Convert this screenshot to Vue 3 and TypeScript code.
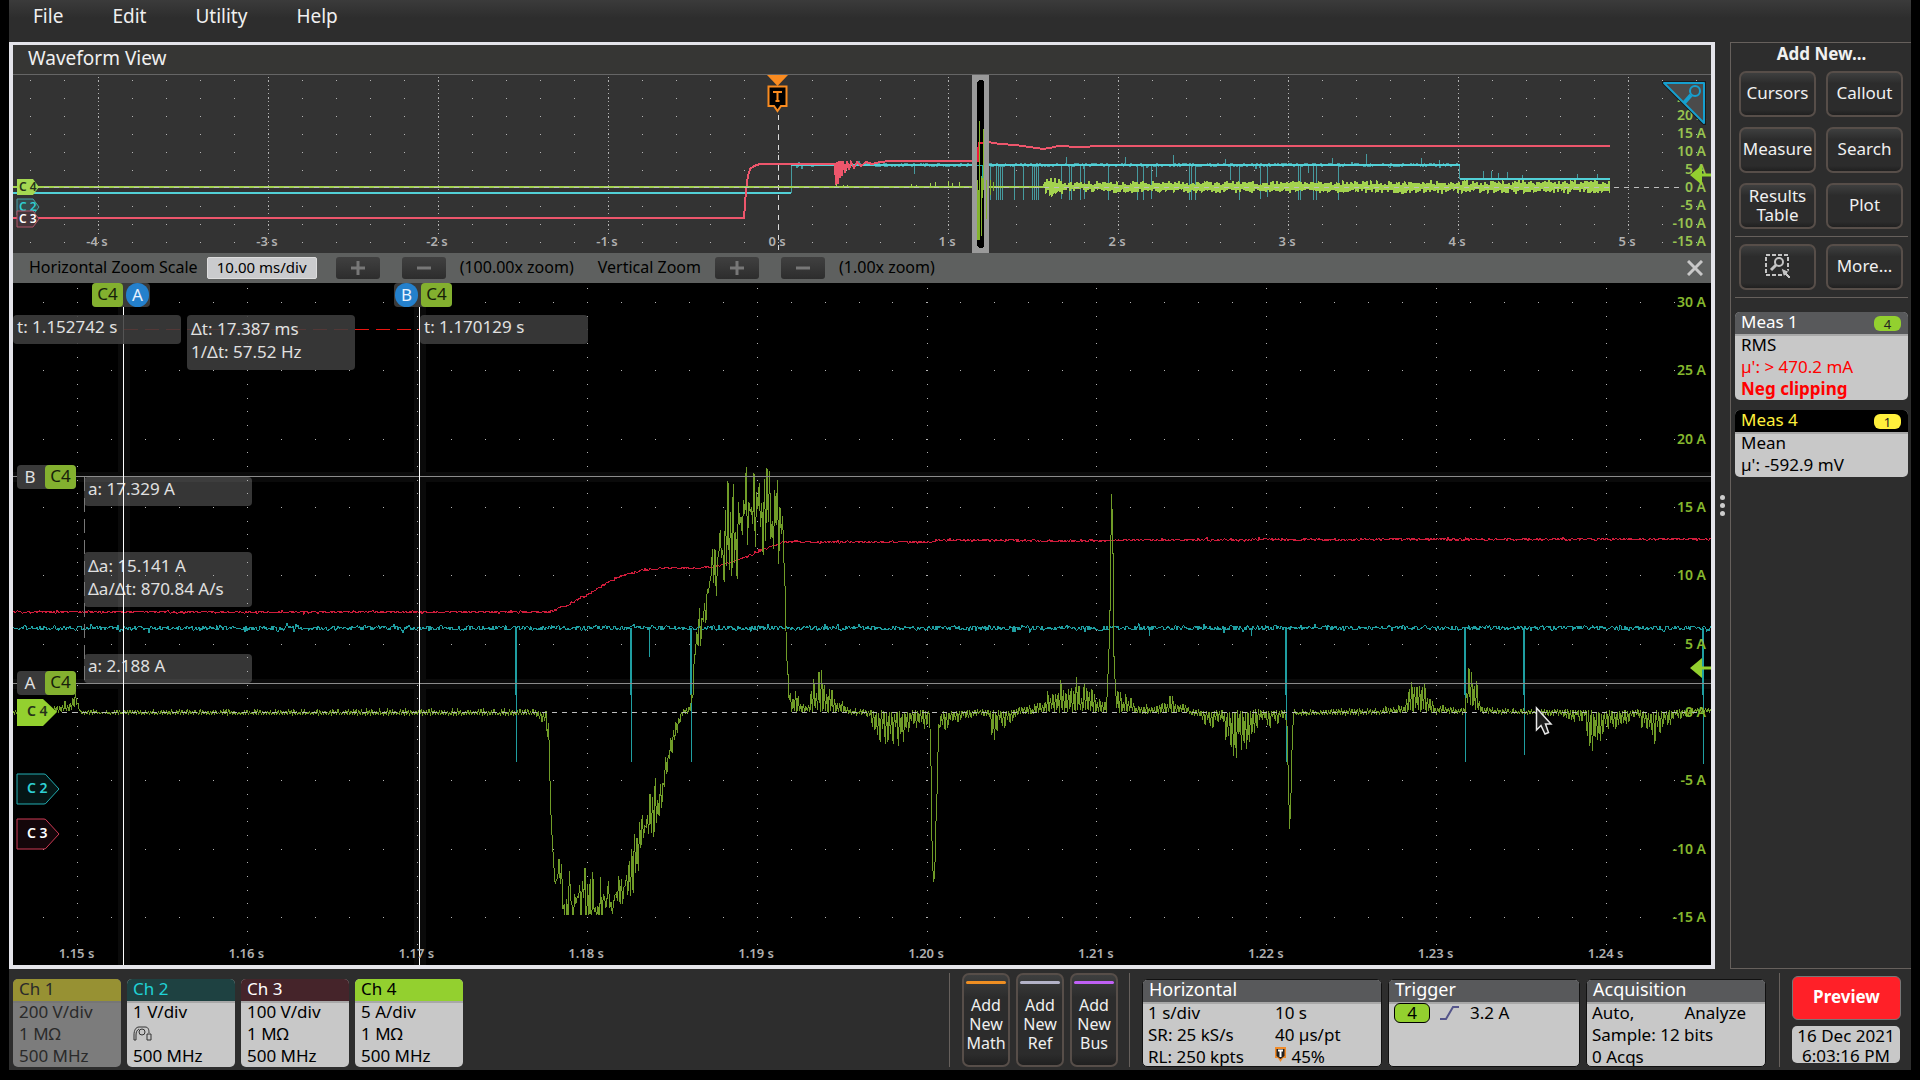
<script setup lang="ts">
import { ref } from 'vue'

type Point = [number, number]
type Band = [number, number, number]

const zoomScale = ref('10.00 ms/div')
const menus = ['File', 'Edit', 'Utility', 'Help']

// Both plots share one horizontal space; each has its own vertical span.
const LEFT = 13
const WIDTH = 1698
const OVER = { top: 75, height: 178 }
const MAIN = { top: 283, height: 682 }

const px = (x: number) => `${((x - LEFT) / WIDTH) * 100}%`
const at = (x: number, y: number, plot: { top: number }) => ({ left: px(x), top: `${y - plot.top}px` })

// Small repeatable generator, so the noise is the same on every load.
function makeRandom(seed: number) {
  let s = seed
  return () => {
    s = (s * 1664525 + 1013904223) % 4294967296
    return s / 4294967296
  }
}

function lerp(points: Point[], x: number) {
  for (let i = 1; i < points.length; i++) {
    if (x <= points[i][0]) {
      const [x0, y0] = points[i - 1]
      const [x1, y1] = points[i]
      return x1 === x0 ? y1 : y0 + ((y1 - y0) * (x - x0)) / (x1 - x0)
    }
  }
  return points[points.length - 1][1]
}

function toPath(points: Point[]) {
  return 'M' + points.map(([x, y]) => `${x.toFixed(1)} ${y.toFixed(1)}`).join('L')
}

function noisy(points: Point[], amp: number, seed: number, step = 1) {
  const rnd = makeRandom(seed)
  const out: Point[] = []
  for (let x = points[0][0]; x <= points[points.length - 1][0]; x += step) {
    let n = (rnd() - 0.5) * 2 * amp
    if (rnd() > 0.95) n *= 2
    out.push([x, lerp(points, x) + n])
  }
  return toPath(out)
}

// Alternates between the top and bottom of an envelope. The side that is away
// from the zero level varies most; the side near it returns to the level.
function burst(bands: Band[], seed: number, zero: number, spread: number, step: number) {
  const rnd = makeRandom(seed)
  const tops = bands.map(([x, t]) => [x, t] as Point)
  const bottoms = bands.map(([x, , b]) => [x, b] as Point)
  const out: Point[] = []
  let up = true
  for (let x = bands[0][0]; x <= bands[bands.length - 1][0]; x += step) {
    const t = lerp(tops, x)
    const b = lerp(bottoms, x)
    const h = b - t
    const far = rnd() * spread
    const near = rnd() * 0.12
    const above = b <= zero + 3 && t > zero - 60
    const below = t >= zero - 6 && b < zero + 60
    if (up) out.push([x, t + h * (below && !above ? near : far)])
    else out.push([x, b - h * (above ? near : far)])
    up = !up
  }
  return toPath(out)
}

const Z = 712
const hump = (x: number, up: number, down: number): Band => [x, Z - up, Z + down]

const c4Bands: Band[] = [
  hump(13, 2, 2), hump(52, 2, 2), hump(54, 8, 1), hump(70, 12, 0), hump(77, 22, -8), hump(80, 2, 2), hump(536, 3, 3),
  [540, 712, 726], [546, 711, 734], [549, 725, 745], [550, 745, 810], [551, 815, 836], [553, 838, 862],
  [555, 865, 912], [558, 840, 890], [562, 860, 910], [564, 868, 935], [580, 866, 940], [600, 864, 940],
  [612, 864, 940], [622, 866, 925], [630, 844, 900], [640, 816, 882], [650, 790, 850], [660, 762, 820],
  [670, 736, 774], [677, 720, 735], [682, 711, 718], [690, 705, 713], [693, 680, 700], [695, 640, 665],
  [697, 600, 650], [702, 606, 646], [709, 556, 608], [715, 540, 600], [720, 505, 590], [726, 488, 582],
  [730, 470, 570], [737, 474, 604], [742, 472, 560], [748, 460, 560], [755, 462, 556], [760, 466, 576],
  [769, 450, 590], [774, 474, 578], [778, 470, 582], [782, 505, 570], [785, 560, 600], [787, 650, 680],
  [789, 690, 700], hump(790, 26, 2), hump(797, 26, 1), hump(802, 14, 1), hump(810, 16, 1), hump(813, 40, 1),
  hump(819, 52, 1), hump(826, 40, 1), hump(834, 20, 1), hump(844, 9, 1), hump(852, 3, 2), hump(866, 2, 4),
  hump(873, 2, 18), hump(880, 2, 32), hump(890, 2, 36), hump(902, 2, 34), hump(912, 2, 24), hump(928, 2, 16),
  hump(930, 2, 2), [931, 760, 770], [932, 840, 848], [934, 898, 904], [936, 812, 840], [937, 800, 815],
  [938, 728, 735], hump(940, 1, 22), hump(948, 1, 20), hump(960, 2, 11), hump(970, 2, 6), hump(990, 2, 5),
  hump(992, 2, 34), hump(999, 2, 22), hump(1010, 2, 15), hump(1020, 5, 2), hump(1035, 8, 2), hump(1046, 22, 1),
  hump(1053, 44, 1), hump(1062, 46, 2), hump(1074, 42, 1), hump(1084, 30, 1), hump(1094, 22, 1),
  hump(1104, 18, 1), hump(1107, 4, 1), [1108, 668, 672], [1110, 630, 634], [1111, 498, 502], [1112, 487, 489],
  [1113, 542, 546], [1114, 660, 664], [1116, 690, 700], hump(1117, 22, 1), hump(1130, 17, 1), hump(1142, 9, 2),
  hump(1160, 8, 2), hump(1170, 20, 1), hump(1184, 12, 1), hump(1190, 3, 2), hump(1200, 2, 12), hump(1216, 2, 18),
  hump(1226, 3, 30), hump(1232, 3, 48), hump(1241, 3, 48), hump(1250, 3, 36), hump(1262, 3, 20), hump(1275, 2, 13),
  hump(1286, 2, 14), [1288, 740, 760], [1289, 820, 826], [1290, 832, 836], [1292, 750, 756], hump(1293, 2, 3),
  hump(1375, 4, 2), hump(1392, 7, 2), hump(1406, 8, 1), hump(1410, 44, 1), hump(1424, 40, 1), hump(1429, 18, 1),
  hump(1435, 8, 1), hump(1450, 6, 1), hump(1465, 4, 1), hump(1467, 44, -10), hump(1472, 46, -4), hump(1478, 40, 1),
  hump(1482, 5, 1), hump(1540, 2, 2), hump(1560, 3, 9), hump(1584, 3, 10), hump(1587, 2, 30), hump(1593, 2, 46),
  hump(1604, 2, 32), hump(1616, 2, 18), hump(1640, 3, 10), hump(1646, 2, 30), hump(1651, 2, 38), hump(1663, 2, 20),
  hump(1676, 3, 10), hump(1690, 3, 4), hump(1711, 4, 3),
]

const clipFloor = 915
const c4Main = burst(c4Bands, 12, Z, 0.6, 1.3)

const c3Main = noisy(
  [[13, 612], [550, 612], [565, 606], [587, 595], [602, 586], [620, 576], [640, 571], [660, 568], [700, 568],
    [720, 566], [740, 559], [760, 551], [782, 542], [930, 542], [940, 540], [1100, 541], [1120, 540], [1711, 539]],
  1.2, 5)
const c2Main = noisy([[13, 628], [1711, 628]], 2.4, 77)
const c2MainDrops: Point[] = [
  [516, 762], [631, 762], [649, 657], [691, 762], [1149, 636], [1251, 636], [1286, 762], [1465, 762], [1524, 755], [1703, 764],
]

const c3Over =
  'M13 218H744L746 190L748 176L750 169L754 166L760 164H835L836 185L837 162L838 184L839 161L840 178L841 161L842 176L843 161L845 173L847 161L849 170L851 162L854 168L857 162L861 166L866 162L872 164L880 162L890 161H977L979 152L980 143L988 142L1000 144L1015 145L1030 147L1043 149L1050 148L1058 146L1080 147L1100 146H1610'
const c2Over = 'M13 193H791M791 165H1460M1460 179H1610'
const c2OverDrops: Point[] = [
  [986, 200], [988, 200], [990, 200], [996, 200], [998, 200], [1000, 200], [1002, 200], [1014, 200], [1023, 200],
  [1032, 200], [1034, 200], [1036, 200], [1038, 200], [1061, 199], [1069, 200], [1071, 200], [1080, 200], [1084, 199],
  [1108, 200], [1137, 200], [1143, 200], [1151, 199], [1156, 177], [1189, 200], [1191, 200], [1195, 200], [1230, 180],
  [1239, 200], [1260, 199], [1267, 197], [1298, 200], [1300, 200], [1308, 173], [1313, 200], [1316, 200], [1338, 200],
  [914, 174], [1066, 157], [1125, 157], [1173, 155], [1225, 159], [1332, 158], [1366, 154], [1421, 158], [1439, 160],
]
const c2OverTails: Point[] = [[1483, 171], [1491, 171], [1498, 173], [1507, 172], [1522, 175], [1577, 174], [1597, 174]]
const c2OverNoise = noisy([[792, 165], [1459, 165]], 2, 31)
const c4Over = burst(
  [[1043, 184, 189], [1046, 179, 195], [1052, 177, 197], [1060, 179, 195], [1068, 182, 191], [1100, 181, 193],
    [1200, 181, 193], [1400, 180, 194], [1610, 180, 194]], 9, 0, 0.35, 1)
const c4OverTicks: Point[] = [[836, 184], [843, 185], [847, 185], [911, 184], [916, 185], [930, 183], [935, 182], [948, 181], [952, 183], [959, 182]]

const overCols = Array.from({ length: 10 }, (_, i) => ({ x: 98 + 170 * i, text: `${i - 4} s` }))
const overMinor = Array.from({ length: 50 }, (_, i) => 30 + 34 * i).filter((x) => x < 1708)
const overRows = [80, 98, 116, 134, 152, 170, 206, 224, 242]
const overLabels = ['25 A', '20 A', '15 A', '10 A', '5 A', '0 A', '-5 A', '-10 A', '-15 A'].map((text, i) => ({ text, y: 97 + 18 * i }))

const mainCols = Array.from({ length: 10 }, (_, i) => ({ x: 77.5 + 169.9 * i, text: `${(1.15 + i / 100).toFixed(2)} s` }))
const mainMinor = Array.from({ length: 50 }, (_, i) => 43.5 + 33.98 * i).filter((x) => x < 1680)
const mainRows = Array.from({ length: 10 }, (_, i) => 302.5 + 68.35 * i).filter((_, i) => i !== 6)
const mainDots = Array.from({ length: 49 }, (_, i) => 288.8 + 13.67 * i)
const mainLabels = Array.from({ length: 10 }, (_, i) => ({ text: `${30 - 5 * i} A`, y: 302 + 68.35 * i }))

const channels = [
  { name: 'Ch 1', cls: 'ch1', scale: '200 V/div', term: '1 MΩ', bw: '500 MHz' },
  { name: 'Ch 2', cls: 'ch2', scale: '1 V/div', term: '', bw: '500 MHz' },
  { name: 'Ch 3', cls: 'ch3', scale: '100 V/div', term: '1 MΩ', bw: '500 MHz' },
  { name: 'Ch 4', cls: 'ch4', scale: '5 A/div', term: '1 MΩ', bw: '500 MHz' },
]
const adders = [
  { kind: 'Math', cls: 'math' },
  { kind: 'Ref', cls: 'ref' },
  { kind: 'Bus', cls: 'bus' },
]
</script>

<template>
  <div class="app">
    <nav class="menu">
      <button v-for="m in menus" :key="m" type="button">{{ m }}</button>
    </nav>

    <div class="middle">
      <section class="view">
        <h1>Waveform View</h1>

        <div class="plot overview">
          <svg class="fill" viewBox="13 75 1698 178" preserveAspectRatio="none" shape-rendering="crispEdges" aria-hidden="true">
            <g class="dots">
              <path v-for="y in overRows" :key="y" :d="overMinor.map((x) => `M${x} ${y}h1v1h-1z`).join('')" />
            </g>
            <g class="dotline">
              <path v-for="c in overCols.filter((c) => c.text !== '0 s')" :key="c.x" :d="`M${c.x + 0.5} 77V235`" />
            </g>
            <path class="zerotime" d="M778.5 115V250" />
            <path class="c2 thin" :d="c2OverDrops.map(([x, y]) => `M${x + 0.5} 165V${y}`).join('') + 'M791.5 165V193M1459.5 165V179'" />
            <path class="c2 thin" :d="c2OverTails.map(([x, y]) => `M${x + 0.5} 179V${y}`).join('')" />
            <path class="c2 thin" :d="c2OverNoise" />
            <path class="c2 thick" :d="c2Over" />
            <path class="c3 thick" :d="c3Over" />
            <path class="c4 thin" :d="c4Over" />
            <path class="c4 thin" :d="c4OverTicks.map(([x, y]) => `M${x + 0.5} 187V${y}`).join('')" />
            <path class="c4 thick" d="M13 187H1610" />
            <path class="zeroline" d="M24 187.500H1680" />
            <g class="window">
              <path class="frame" fill-rule="evenodd" d="M972 75H989V253H972ZM977 82V246L979 248H982L984 246V82L982 80H979Z" />
              <path class="hole" d="M977 82V246L979 248H982L984 246V82L982 80H979Z" />
              <path class="v2" d="M977 165H984M979.500 165V200M982.500 165V196" />
              <path class="v3" d="M977 161H978V152L979 143H984" />
              <path class="v4" d="M977.500 180V240M978.500 190V240M979.500 121V240M981.500 176V236M982.500 178V198M983.500 129V190M986.500 180V219M990.500 180V195M993.500 182V191" />
            </g>
          </svg>
          <span v-for="c in overCols" :key="c.text" class="time" :style="at(c.x - 1, 241, OVER)">{{ c.text }}</span>
          <span v-for="l in overLabels" :key="l.text" class="amp" :style="{ top: `${l.y - OVER.top}px` }">{{ l.text }}</span>
          <svg class="trig" :style="at(767, 75, OVER)" width="22" height="38" viewBox="0 0 22 38" aria-hidden="true">
            <path d="M0 0H21L10.500 11Z" fill="#f98b20" />
            <path d="M1.500 11.500H19.500V31H14L10.500 36L7 31H1.500Z" fill="#000" stroke="#f98b20" stroke-width="2" />
            <path d="M6 17H15M10.500 17V26M8.500 26H12.500" stroke="#f98b20" stroke-width="2" fill="none" />
          </svg>
          <svg class="lens" width="44" height="44" viewBox="0 0 44 44" aria-hidden="true">
            <path d="M2 2H42V42Z" fill="#4b4b4b" stroke="#1a1a1a" stroke-width="4" />
            <path d="M2 2H42V42Z" fill="#4b4b4b" stroke="#169fcf" stroke-width="2" stroke-linejoin="round" />
            <circle cx="33" cy="10" r="5" fill="none" stroke="#169fcf" stroke-width="2" />
            <path d="M29 14L22 22" stroke="#169fcf" stroke-width="4" />
          </svg>
          <svg class="level lo" width="21" height="22" viewBox="0 0 21 22" aria-hidden="true">
            <path d="M0 11L12 1V9.500H21V12.500H12V21Z" fill="#93d02f" />
          </svg>
          <span class="tag small t4" :style="at(16, 178, OVER)"><svg width="24" height="18" viewBox="0 0 24 18"><path d="M1 1H17L23 9L17 17H1Z" /></svg><b>C 4</b></span>
          <span class="tag small t2" :style="at(16, 198, OVER)"><svg width="24" height="18" viewBox="0 0 24 18"><path d="M1 1H17L23 9L17 17H1Z" /></svg><b>C 2</b></span>
          <span class="tag small t3" :style="at(16, 210, OVER)"><svg width="24" height="18" viewBox="0 0 24 18"><path d="M1 1H17L23 9L17 17H1Z" /></svg><b>C 3</b></span>
        </div>

        <div class="zoombar">
          <label for="hscale">Horizontal Zoom Scale</label>
          <input id="hscale" v-model="zoomScale" type="text" />
          <button type="button" class="step" aria-label="Zoom in horizontally"><svg width="16" height="16" viewBox="0 0 16 16"><path d="M8 1V15M1 8H15" /></svg></button>
          <button type="button" class="step" aria-label="Zoom out horizontally"><svg width="16" height="16" viewBox="0 0 16 16"><path d="M1 8H15" /></svg></button>
          <span class="factor">(100.00x zoom)</span>
          <span class="vlabel">Vertical Zoom</span>
          <button type="button" class="step" aria-label="Zoom in vertically"><svg width="16" height="16" viewBox="0 0 16 16"><path d="M8 1V15M1 8H15" /></svg></button>
          <button type="button" class="step" aria-label="Zoom out vertically"><svg width="16" height="16" viewBox="0 0 16 16"><path d="M1 8H15" /></svg></button>
          <span class="factor">(1.00x zoom)</span>
          <button type="button" class="close" aria-label="Close zoom"><svg width="16" height="16" viewBox="0 0 16 16"><path d="M1 1L15 15M15 1L1 15" /></svg></button>
        </div>

        <div class="plot main">
          <div class="readout" :style="at(84, 477, MAIN)">a: 17.329 A</div>
          <div class="readout two" :style="at(84, 552, MAIN)">Δa: 15.141 A<br />Δa/Δt: 870.84 A/s</div>
          <div class="readout" :style="at(84, 654, MAIN)">a: 2.188 A</div>
          <svg class="fill" viewBox="13 283 1698 682" preserveAspectRatio="none" shape-rendering="crispEdges" aria-hidden="true">
            <defs>
              <clipPath id="adc"><rect x="13" y="283" width="1698" :height="clipFloor - 283" /></clipPath>
            </defs>
            <g class="halo">
              <path d="M118 283h12v682h-12zM414 283h12v682h-12zM13 472h1698v10h-1698zM13 679h1698v10h-1698z" />
            </g>
            <g class="dots">
              <path v-for="y in mainRows" :key="y" :d="mainMinor.map((x) => `M${Math.floor(x)} ${Math.floor(y)}h1v1h-1z`).join('')" />
              <path v-for="c in mainCols" :key="c.x" :d="mainDots.map((y) => `M${Math.floor(c.x)} ${Math.floor(y)}h1v1h-1z`).join('')" />
            </g>
            <path class="m2" :d="c2Main" />
            <path class="m2" :d="c2MainDrops.map(([x, y]) => `M${x + 0.5} 628V${y}` + (y > 700 ? `M${x - 0.5} 628V695` : '')).join('')" />
            <path class="m3" :d="c3Main" />
            <path class="m4" clip-path="url(#adc)" :d="c4Main" />
            <path class="zeroline" d="M62 712.500H1700" />
            <path class="hcursor" d="M13 476.500H1711M13 683.500H1711" />
            <path class="bracket" d="M84.500 477V683" />
            <path class="span" d="M124 329.500H419" />
            <path class="vcursor" d="M123.500 283V965M419.500 283V965" />
          </svg>
          <span v-for="c in mainCols" :key="c.text" class="time" :style="at(c.x - 1, 953, MAIN)">{{ c.text }}</span>
          <span v-for="l in mainLabels" :key="l.text" class="amp" :style="{ top: `${l.y - MAIN.top}px` }">{{ l.text }}</span>

          <div class="readout" :style="at(13, 315, MAIN)">t: 1.152742 s</div>
          <div class="readout two" :style="at(187, 315, MAIN)">Δt: 17.387 ms<br />1/Δt: 57.52 Hz</div>
          <div class="readout" :style="at(420, 315, MAIN)">t: 1.170129 s</div>

          <div class="handle" :style="at(92, 283, MAIN)"><span class="src">C4</span><span class="ball">A</span></div>
          <div class="handle" :style="at(394, 283, MAIN)"><span class="ball">B</span><span class="src">C4</span></div>
          <div class="handle" :style="at(17, 465, MAIN)"><span class="name">B</span><span class="src">C4</span></div>
          <div class="handle" :style="at(17, 671, MAIN)"><span class="name">A</span><span class="src">C4</span></div>

          <span class="tag t4" :style="at(16, 696, MAIN)"><svg width="44" height="32" viewBox="0 0 44 32"><path d="M1 3H27L41 16L27 30H1Z" /></svg><b>C 4</b></span>
          <span class="tag t2" :style="at(16, 773, MAIN)"><svg width="44" height="32" viewBox="0 0 44 32"><path d="M1 1H28Q30 1 31 3L43 16L31 29Q30 31 28 31H1Z" /></svg><b>C 2</b></span>
          <span class="tag t3" :style="at(16, 818, MAIN)"><svg width="44" height="32" viewBox="0 0 44 32"><path d="M1 1H28Q30 1 31 3L43 16L31 29Q30 31 28 31H1Z" /></svg><b>C 3</b></span>

          <svg class="level hi" width="21" height="22" viewBox="0 0 21 22" aria-hidden="true">
            <path d="M0 11L12 1V9.500H21V12.500H12V21Z" fill="#93d02f" />
          </svg>
          <svg class="pointer" :style="at(1535, 706, MAIN)" width="18" height="30" viewBox="0 0 18 30" aria-hidden="true">
            <path d="M1.500 2V24L6 19.500L10 28L13.500 26.500L10.500 18H16Z" fill="#1c1c1c" stroke="#e8e8e8" stroke-width="1.5" />
          </svg>
        </div>
      </section>

      <button type="button" class="grip" aria-label="Resize results bar"><i></i><i></i><i></i></button>

      <aside class="side">
        <h2>Add New...</h2>
        <div class="grid">
          <button type="button">Cursors</button>
          <button type="button">Callout</button>
          <button type="button">Measure</button>
          <button type="button">Search</button>
          <button type="button">Results<br />Table</button>
          <button type="button">Plot</button>
        </div>
        <hr />
        <div class="grid">
          <button type="button" aria-label="Zoom to area">
            <svg width="28" height="26" viewBox="0 0 28 26" fill="none" stroke="#c4c4c4">
              <path d="M2 2H24V22H2Z" stroke-width="2" stroke-dasharray="4 2" />
              <circle cx="15" cy="9" r="4" stroke-width="2" />
              <path d="M12 12L7 17" stroke-width="3" />
              <path d="M17 15L26 19L23 20L27 24L25 26L21 22L20 25Z" fill="#c4c4c4" stroke="#2d2d2d" stroke-width="1" />
            </svg>
          </button>
          <button type="button">More...</button>
        </div>
        <hr />
        <div class="card meas">
          <header>Meas 1 <span class="pill">4</span></header>
          <p>RMS</p>
          <p class="warn">µ': &gt; 470.2 mA</p>
          <p class="warn strong">Neg clipping</p>
        </div>
        <div class="card meas yellow">
          <header>Meas 4 <span class="pill">1</span></header>
          <p>Mean</p>
          <p>µ': -592.9 mV</p>
        </div>
      </aside>
    </div>

    <footer class="bottom">
      <div class="channels">
        <div v-for="c in channels" :key="c.name" class="card chan" :class="c.cls">
          <header>{{ c.name }}</header>
          <p>{{ c.scale }}</p>
          <p v-if="c.term">{{ c.term }}</p>
          <p v-else>
            <svg width="20" height="16" viewBox="0 0 20 16" fill="none" stroke="#333">
              <path d="M1 14V9C1 4 3 1 6 1H12C15 1 16 3 16 7M3 14V9C3 6 4 4 6 3M1 14H3" />
              <circle cx="9" cy="6" r="3" />
              <path d="M14 8H18V14H14Z" />
            </svg>
          </p>
          <p>{{ c.bw }}</p>
        </div>
      </div>
      <div class="adders">
        <button v-for="a in adders" :key="a.kind" type="button"><i :class="a.cls"></i>Add<br />New<br />{{ a.kind }}</button>
      </div>
      <div class="settings">
        <div class="card horiz">
          <header>Horizontal</header>
          <div class="cols"><p>1 s/div</p><p>10 s</p></div>
          <div class="cols"><p>SR: 25 kS/s</p><p>40 µs/pt</p></div>
          <div class="cols">
            <p>RL: 250 kpts</p>
            <p>
              <svg width="12" height="16" viewBox="0 0 12 16"><path d="M0 0H11V11H8L5.500 15L3 11H0Z" fill="#f08a28" /><path d="M1.500 2H9.500V9L5.500 12L1.500 9Z" fill="#222" /><path d="M3 3.500H8M5.500 3V10" stroke="#fff" stroke-width="2" /></svg>
              45%
            </p>
          </div>
        </div>
        <div class="card trigger">
          <header>Trigger</header>
          <p class="edge">
            <span class="pill">4</span>
            <svg width="20" height="14" viewBox="0 0 20 14"><path d="M0 13H6L13 1H19" fill="none" stroke="#55558a" stroke-width="2" /></svg>
            <span>3.2 A</span>
          </p>
        </div>
        <div class="card acq">
          <header>Acquisition</header>
          <div class="split"><p>Auto,</p><p>Analyze</p></div>
          <p>Sample: 12 bits</p>
          <p>0 Acqs</p>
        </div>
      </div>
      <div class="status">
        <button type="button">Preview</button>
        <div class="clock">16 Dec 2021<br />6:03:16 PM</div>
      </div>
    </footer>
  </div>
</template>

<style>
body {
  background: #000;
}
</style>

<style scoped>
* {
  box-sizing: border-box;
}
.app {
  margin: 0 9px;
  height: 1070px;
  background: #2d2d2d;
  font: 17px/22px "Noto Sans", "Open Sans", sans-serif;
  color: #f0f0f0;
  display: flex;
  flex-direction: column;
}
button {
  font: inherit;
  color: inherit;
  padding: 0;
  border: 0;
  background: none;
}
h1,
h2,
p {
  margin: 0;
  font-size: inherit;
  font-weight: 400;
}
.menu {
  height: 42px;
  padding: 0 24px;
  display: flex;
  align-items: flex-start;
  gap: 49px;
  background: linear-gradient(#3b3b3b, #2d2d2d 18px);
  font-size: 19px;
}
.menu button {
  height: 32px;
}
.middle {
  display: flex;
  height: 927px;
}
.view {
  flex: 1;
  min-width: 0;
  border: 4px solid #e4e4ea;
  border-top-width: 3px;
  display: flex;
  flex-direction: column;
}
.view h1 {
  height: 30px;
  line-height: 27px;
  padding-left: 15px;
  font-size: 19px;
  background: #363634;
  border-bottom: 1px solid #666;
}
.plot {
  position: relative;
  overflow: hidden;
}
.overview {
  height: 178px;
  background: #333;
}
.main {
  height: 682px;
  background: #000;
}
.fill {
  position: absolute;
  inset: 0;
  width: 100%;
  height: 100%;
}
.fill path {
  fill: none;
}
.fill .dots path {
  fill: #b4b4b4;
}
.dotline path {
  stroke: #b4b4b4;
  stroke-dasharray: 1 3;
}
.zerotime {
  stroke: #ddd;
  stroke-dasharray: 5 5;
}
.zeroline {
  stroke: #bdbdbd;
  stroke-dasharray: 5 5;
}
.thick {
  stroke-width: 2;
}
.thin {
  stroke-width: 1;
}
.c2 {
  stroke: #52d0d6;
}
.c2.thin {
  stroke: #469a9e;
}
.c3 {
  stroke: #ee566c;
}
.c4 {
  stroke: #a3d24f;
}
.fill .frame {
  fill: #9a9a9a;
}
.fill .hole {
  fill: #000;
}
.v2 {
  stroke: #1ea7aa;
}
.v3 {
  stroke: #ee1c3c;
  stroke-width: 2;
}
.v4 {
  stroke: #84b42e;
}
.fill .halo path {
  fill: rgba(255, 255, 255, 0.04);
}
.m2 {
  stroke: #1f9ea1;
}
.m3 {
  stroke: #d01c3b;
}
.m4 {
  stroke: #709c28;
}
.hcursor {
  stroke: #8c8c8c;
}
.vcursor {
  stroke: #fff;
}
.bracket {
  stroke: #777;
  stroke-dasharray: 14 7;
}
.span {
  stroke: #e8150f;
  stroke-dasharray: 14 7;
}
.time,
.amp {
  position: absolute;
  font-size: 13px;
  line-height: 16px;
  font-weight: 600;
  white-space: nowrap;
  color: #b0b0b0;
  transform: translate(-50%, -50%);
}
.amp {
  right: 5px;
  font-size: 14px;
  color: #86b82e;
  transform: translateY(-50%);
}
.overview .amp {
  color: #99c450;
}
.trig,
.pointer {
  position: absolute;
}
.lens {
  position: absolute;
  right: 5px;
  top: 6px;
}
.level {
  position: absolute;
  right: 0;
}
.level.lo {
  top: 89px;
}
.level.hi {
  top: 374px;
}
.tag {
  position: absolute;
  width: 44px;
  height: 32px;
}
.tag svg {
  position: absolute;
}
.tag b {
  position: relative;
  display: block;
  padding-left: 11px;
  font-size: 14px;
  line-height: 30px;
  font-weight: 600;
}
.tag.small {
  width: 24px;
  height: 18px;
}
.tag.small b {
  padding-left: 3px;
  font-size: 12px;
  line-height: 17px;
}
.t4 path {
  fill: #93d02f;
}
.t4 b {
  color: #26331a;
}
.t2 path {
  fill: #051616;
  stroke: #22adb2;
}
.t2 b {
  color: #2fd0d4;
}
.t3 path {
  fill: #14060a;
  stroke: #cf3a54;
}
.t3 b {
  color: #fff;
}
.small.t4 path {
  fill: #a5d852;
}
.small.t2 path {
  fill: #354b4d;
  stroke: #4aa0a4;
}
.small.t3 path {
  fill: #453539;
  stroke: #b0566a;
}
.readout {
  position: absolute;
  width: 168px;
  height: 29px;
  padding: 0 4px;
  line-height: 24px;
  border-radius: 4px;
  background: rgba(62, 62, 62, 0.88);
  color: #e0e0e0;
  white-space: nowrap;
}
.readout.two {
  height: 55px;
  padding-top: 2px;
  line-height: 23px;
}
.handle {
  position: absolute;
  height: 24px;
  display: flex;
  gap: 2px;
  border-radius: 4px;
  background: #3a3a3a;
  line-height: 23px;
  text-align: center;
}
.handle span {
  height: 24px;
}
.handle .src {
  width: 31px;
  border-radius: 4px;
  background: #83b02f;
  color: #16200a;
  line-height: 21px;
}
.handle .ball {
  width: 23px;
  margin: 0 1px;
  border-radius: 12px;
  background: #2480cc;
  color: #e8f2ff;
}
.handle .name {
  width: 26px;
  color: #e0e0e0;
}
.zoombar {
  height: 30px;
  padding: 0 8px 0 16px;
  display: flex;
  align-items: center;
  background: #5e605f;
  color: #000;
  font-size: 16px;
  line-height: 20px;
}
.zoombar label,
.zoombar span {
  padding-bottom: 2px;
}
.zoombar input {
  width: 110px;
  height: 22px;
  margin: 0 19px 0 9px;
  padding: 0 0 2px;
  border: 1px solid #ddd;
  border-radius: 2px;
  background: #cacbcd;
  color: #000;
  font: inherit;
  font-size: 15px;
  text-align: center;
}
.step {
  width: 44px;
  height: 22px;
  margin-right: 22px;
  border-radius: 3px;
  background: linear-gradient(#404040, #2d2d2d);
  display: flex;
  align-items: center;
  justify-content: center;
}
.step svg {
  fill: none;
  stroke: #777;
  stroke-width: 3;
}
.step + .factor {
  margin-left: -8px;
}
.vlabel {
  margin: 0 14px 0 24px;
}
.close {
  margin-left: auto;
  height: 16px;
}
.close svg {
  display: block;
  stroke: #c8c8c8;
  stroke-width: 3;
}
.grip {
  width: 15px;
  display: flex;
  flex-direction: column;
  align-items: center;
  justify-content: center;
  gap: 3px;
}
.grip i {
  width: 5px;
  height: 5px;
  border-radius: 3px;
  background: #ccc;
}
.side {
  width: 181px;
  border: 1px solid #66605c;
  border-right: 0;
  padding: 0 3px 0 4px;
}
.side h2 {
  height: 28px;
  line-height: 22px;
  text-align: center;
  font-weight: 700;
}
.side .grid {
  display: grid;
  grid-template-columns: 77px 77px;
  gap: 10px;
  padding: 0 5px 0 4px;
}
.side .grid button {
  height: 46px;
  padding-bottom: 3px;
  line-height: 19px;
  display: flex;
  align-items: center;
  justify-content: center;
}
.side .grid button,
.adders button {
  border: 2px solid #574e49;
  border-radius: 7px;
  background: linear-gradient(#3e3f3f, #2c2c2c 25%, #2c2c2c 88%, #202020);
}
.side hr {
  margin: 7px 0;
  border: 0;
  border-top: 1px solid #66605c;
}
.card {
  border-radius: 5px;
  background: #c8c8c8;
  color: #000;
  overflow: hidden;
}
.card header {
  height: 24px;
  margin-bottom: -2px;
  border-bottom: 2px solid #a8a8a8;
  line-height: 19px;
  background: #58595b;
  color: #fff;
}
.card p {
  line-height: 22px;
  white-space: nowrap;
}
.meas {
  margin-top: 14px;
  height: 88px;
}
.meas header,
.meas p {
  padding: 0 6px;
}
.meas header {
  display: flex;
  justify-content: space-between;
}
.meas.yellow {
  margin-top: 10px;
  height: 67px;
}
.meas.yellow header {
  background: #000;
  color: #fff03c;
}
.meas.yellow .pill {
  background: #fff03c;
}
.pill {
  width: 27px;
  height: 15px;
  border-radius: 6px;
  background: #93d02f;
  color: #222;
  font-size: 13px;
  line-height: 16px;
  text-align: center;
}
.meas .pill {
  margin: 4px 1px 0 0;
}
.warn {
  color: #f00;
}
.strong {
  font-weight: 700;
}
.bottom {
  height: 101px;
  display: flex;
}
.channels {
  flex: 1;
  display: flex;
  gap: 6px;
  padding: 10px 0 0 4px;
}
.chan {
  width: 108px;
  height: 88px;
}
.chan header,
.chan p {
  padding-left: 6px;
}
.chan p svg {
  display: block;
  padding-top: 3px;
  height: 19px;
}
.chan p {
  height: 22px;
}
.ch1 {
  background: #7c7c7c;
  color: #2a2a2a;
}
.ch1 header {
  background: #979133;
  border-color: #767676;
  color: #2a2a2a;
}
.ch2 header {
  background: #1e4141;
  color: #20d2d6;
}
.ch3 header {
  background: #45242a;
}
.ch4 header {
  background: #93d02f;
  color: #000;
}
.adders {
  display: flex;
  gap: 6px;
  margin-top: 4px;
  height: 94px;
  padding: 0 11px 0 12px;
  border: solid #66605c;
  border-width: 0 1px;
}
.adders button {
  width: 48px;
  padding-bottom: 6px;
  font-size: 16px;
  line-height: 19px;
}
.adders i {
  display: block;
  width: 40px;
  height: 3px;
  margin: 0 auto 12px;
  border-radius: 2px;
}
.math {
  background: #ee8e22;
}
.ref {
  background: #b3b3c8;
}
.bus {
  background: #c060f5;
}
.settings {
  display: flex;
  gap: 6px;
  padding: 10px 13px 0 12px;
}
.settings .card {
  height: 88px;
  border: 1px solid #111;
}
.settings header {
  padding-left: 6px;
  font-size: 18px;
}
.settings p {
  padding-left: 5px;
}
.horiz {
  width: 240px;
}
.cols {
  display: grid;
  grid-template-columns: 127px 1fr;
}
.trigger {
  width: 192px;
}
.edge {
  display: flex;
  align-items: center;
}
.edge svg {
  margin: 0 10px;
}
.edge .pill {
  width: 36px;
  height: 20px;
  border: 1px solid #000;
  color: #000;
  font-size: 17px;
  line-height: 17px;
}
.acq {
  width: 180px;
}
.split {
  display: flex;
  justify-content: space-between;
  padding-right: 19px;
}
.status {
  margin-top: 4px;
  height: 94px;
  padding: 3px 10px 0 12px;
  border-left: 1px solid #66605c;
}
.status button {
  display: block;
  width: 109px;
  height: 44px;
  padding-bottom: 2px;
  border: 1px solid #777;
  border-radius: 6px;
  background: #ff2028;
  color: #fff;
  font-weight: 700;
}
.clock {
  width: 108px;
  height: 37px;
  margin-top: 6px;
  border-radius: 5px;
  background: #c8c8c8;
  color: #000;
  line-height: 20px;
  text-align: center;
}
</style>
